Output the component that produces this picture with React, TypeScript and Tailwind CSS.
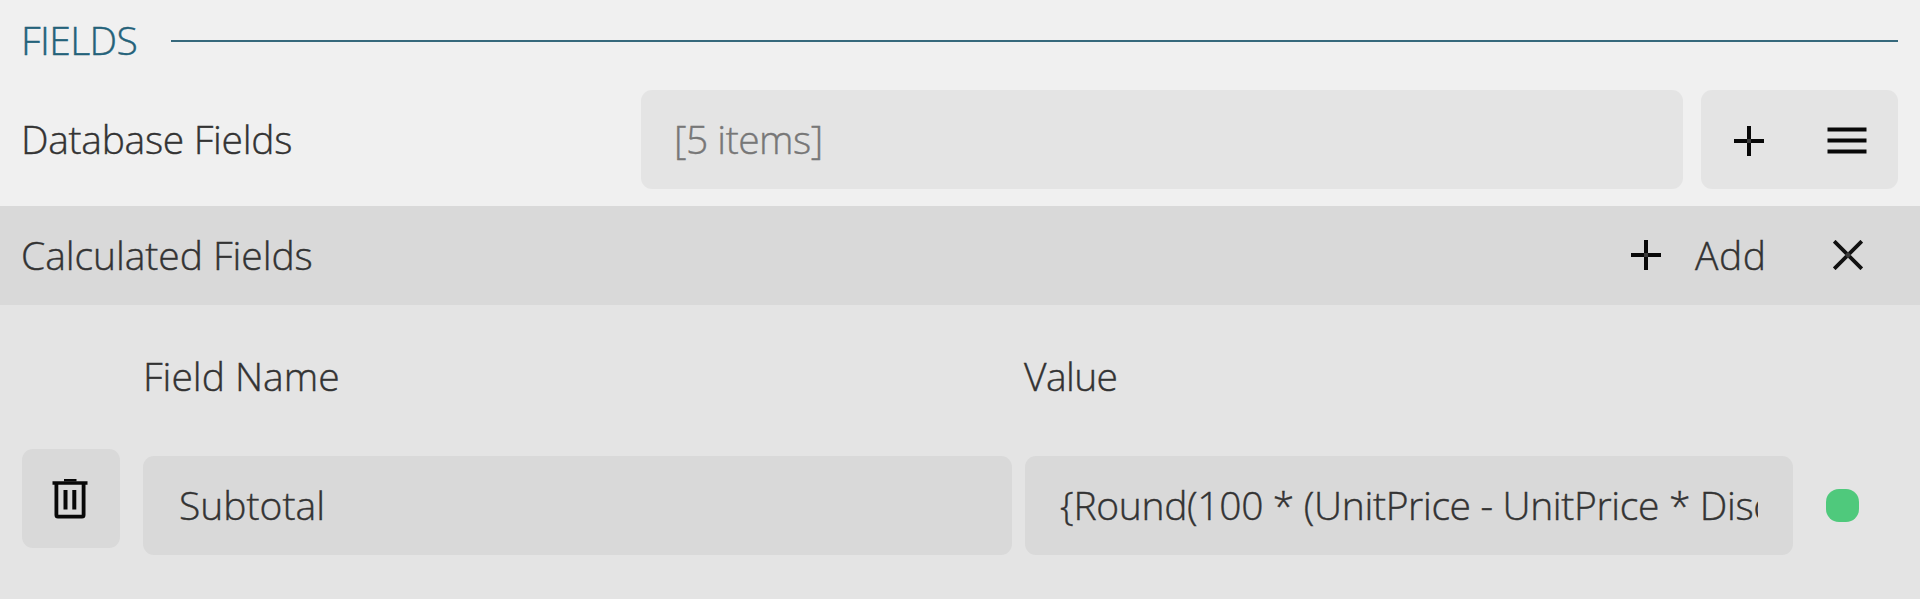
import { useState } from "react";
import type { ReactNode } from "react";

interface CalculatedField {
  name: string;
  value: string;
}

const initialFields: CalculatedField[] = [
  { name: "Subtotal", value: "{Round(100 * (UnitPrice - UnitPrice * Discount))}" },
];

function PlusIcon() {
  return (
    <svg width="30" height="30" viewBox="0 0 30 30" className="shrink-0">
      <path d="M0 15h30M15 0v30" stroke="#080808" strokeWidth="4" />
      <rect x="13" y="13" width="4" height="4" fill="#3a3a3a" />
    </svg>
  );
}

function MenuIcon() {
  return (
    <svg width="40" height="27" viewBox="0 0 40 27" className="shrink-0">
      <path d="M0.5 2.5h39M0.5 13.5h39M0.5 24.5h39" stroke="#080808" strokeWidth="4" />
    </svg>
  );
}

function CloseIcon() {
  return (
    <svg width="30" height="30" viewBox="0 0 30 30" className="shrink-0">
      <path d="M1.2 1.2l27.6 27.6M28.8 1.2L1.2 28.8" stroke="#111" strokeWidth="3.8" />
      <path d="M15 11.8l3.2 3.2-3.2 3.2-3.2-3.2z" fill="#3a3a3a" />
    </svg>
  );
}

function TrashIcon() {
  return (
    <svg width="36" height="40" viewBox="0 0 36 40" className="shrink-0">
      <g fill="none" stroke="#080808">
        <path d="M12 1.2h12.5" strokeWidth="2.4" />
        <path d="M0.5 4h35" strokeWidth="3.6" />
        <path d="M4.4 5v31q0 1.6 1.6 1.6h24q1.6 0 1.6-1.6V5" strokeWidth="3.8" />
        <path d="M13.5 11v19.4M22.3 11v19.4" strokeWidth="4" />
      </g>
    </svg>
  );
}

function TextBox({ children, className = "" }: { children: ReactNode; className?: string }) {
  return (
    <div className={`flex h-[99px] items-center rounded-[11px] pb-[2px] ${className}`}>
      <div className="w-full overflow-hidden whitespace-pre">{children}</div>
    </div>
  );
}

export default function App() {
  const [fields, setFields] = useState(initialFields);
  const [open, setOpen] = useState(true);

  const addField = () => setFields([...fields, { name: "", value: "" }]);
  const removeField = (index: number) => setFields(fields.filter((_, i) => i !== index));

  return (
    <div className="flex h-[599px] w-[1920px] flex-col overflow-hidden bg-[#f0f0f0] font-['Open_Sans',sans-serif] text-[39px] leading-[54px] font-light text-[#333] [-webkit-text-stroke:0.4px]">
      {/* Section title */}
      <div className="flex h-[90px] items-start pr-[22px] pl-[21px]">
        <h2 className="mt-[12px] w-[150px] pt-px tracking-[-0.6px] text-[#24627a]">FIELDS</h2>
        <div className="mt-[40px] h-[2px] flex-1 bg-[#36697c]" />
      </div>

      {/* Database fields */}
      <div className="flex h-[116px] items-start pr-[22px] pl-[21px]">
        <div className="flex h-[99px] w-[620px] items-center pb-[2px] tracking-[-0.3px]">Database Fields</div>
        <TextBox className="w-[1042px] bg-[#e4e4e4] pr-[35px] pl-[33px] tracking-[-0.5px] text-[#777]">[5 items]</TextBox>
        <div className="ml-[18px] flex h-[99px] w-[197px] rounded-[11px] bg-[#e4e4e4] pt-[2px] pr-[2px]">
          <button type="button" className="flex flex-1 items-center justify-center pr-[2px]">
            <PlusIcon />
          </button>
          <button type="button" onClick={() => setOpen(!open)} className="flex flex-1 items-center justify-center pr-[1px]">
            <MenuIcon />
          </button>
        </div>
      </div>

      {/* Calculated fields */}
      <div className="flex h-[99px] shrink-0 items-center bg-[#d9d9d9] pr-[57px] pb-[2px] pl-[21px]">
        <div className="flex-1 tracking-[-0.05px]">Calculated Fields</div>
        <button type="button" onClick={addField} className="flex items-center">
          <PlusIcon />
          <span className="ml-[34px] w-[138px] text-left tracking-[0.5px]">Add</span>
        </button>
        <button type="button" onClick={() => setOpen(false)}>
          <CloseIcon />
        </button>
      </div>

      {open && (
        <div className="flex-1 bg-[#e4e4e4] px-[22px]">
          <div className="flex h-[144px] items-center pb-[2px] pl-[121px]">
            <div className="w-[881px]">Field Name</div>
            <div className="tracking-[-0.6px]">Value</div>
          </div>
          {fields.map((field, i) => (
            <div key={i} className="flex items-start">
              <button
                type="button"
                onClick={() => removeField(i)}
                className="flex h-[99px] w-[98px] items-center justify-center rounded-[11px] bg-[#d9d9d9] pr-[2px]"
              >
                <TrashIcon />
              </button>
              <TextBox className="mt-[7px] ml-[23px] w-[869px] bg-[#d9d9d9] px-[36px]">{field.name}</TextBox>
              <TextBox className="mt-[7px] ml-[13px] w-[768px] bg-[#d9d9d9] px-[35px] tracking-[-0.34px]">{field.value}</TextBox>
              <div className="mt-[40px] ml-[33px] h-[33px] w-[33px] rounded-[13px] bg-[#4fc97c]" />
            </div>
          ))}
        </div>
      )}
    </div>
  );
}
